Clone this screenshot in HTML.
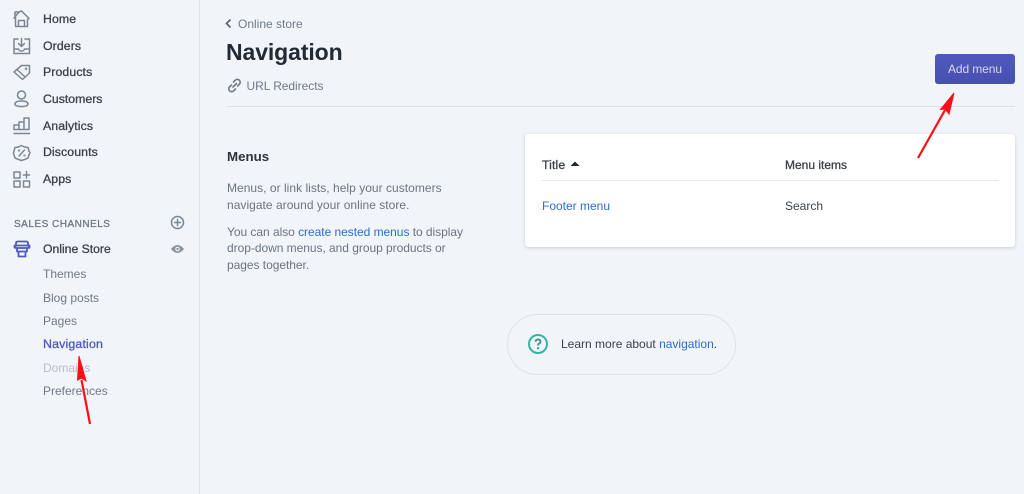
<!DOCTYPE html>
<html><head><meta charset="utf-8">
<style>
html,body{margin:0;padding:0;width:1024px;height:494px;overflow:hidden;background:#f1f4f8;}
body{position:relative;font-family:"Liberation Sans",sans-serif;color:#3b424b;filter:blur(.35px);}
.t{position:absolute;white-space:nowrap;font-size:12px;line-height:16px;letter-spacing:0;}
.m{-webkit-text-stroke:.3px currentColor;font-size:12.3px;letter-spacing:.1px;}
.g{color:#6f7a87}
a{color:#2c6ecb;text-decoration:none}
svg{position:absolute;overflow:visible}
.ic{fill:none;stroke:#7b8794;stroke-width:1.5;stroke-linejoin:round;stroke-linecap:round}
</style></head><body>
<div style="position:absolute;left:199px;top:0;width:1px;height:494px;background:#dfe3e8"></div>

<svg class="ic" style="left:0;top:0" width="34" height="200" viewBox="0 0 34 200">
<path d="M15 17 V12 H19 L21.500 11 L29 18.500 L27.500 19.500 V26.500 H15.500 V17 M14 18 L19 12 M18.500 26.500 V20.500 H24.500 V26.500"/>
<path d="M14 39 H18 M25 39 H29.500 V53.500 H14 V39 M21.500 38.500 V46 M18.500 43.500 L21.500 46.500 L24.500 43.500 M14 49 H18.500 Q19 51 21.500 51 Q24 51 24.500 49 H29.500"/>
<path d="M14 72 L21.500 65.500 H29.500 V73 L22.500 79.500 Z M17 69.500 L24.500 76.500"/>
<circle cx="26" cy="68.800" r=".5"/>
<circle cx="21.500" cy="95" r="4"/>
<path d="M15 104 Q15 101 21.500 101 Q28 101 28 104 Q28 106.500 21.500 106.500 Q15 106.500 15 104Z"/>
<path d="M14 133.500 H29.500 M14 129.500 V125 H19 V129.500 M19 129.500 V122 H24 V129.500 M24 129.500 V118 H29 V129.500 M14 129.500 H29"/>
<path d="M21.500 145.500 L24.500 147 L28 147.500 L29 151 L30 153 L29 155 L28 158 L24.500 159.500 L21.500 160.500 L18.500 159.500 L15 158 L14 155 L13.500 153 L14 151 L15 147.500 L18.500 147 Z M19 156 L24.500 150"/>
<circle cx="19" cy="150.500" r=".4"/><circle cx="24.500" cy="155.500" r=".4"/>
<rect x="14" y="172" width="6" height="6"/><rect x="14" y="181" width="6" height="6"/><rect x="23.500" y="181" width="6" height="6"/>
<path d="M26.500 171.500 V178 M23.500 175 H29.500"/>
</svg>

<div class="t m" style="left:43px;top:11px">Home</div>
<div class="t m" style="left:43px;top:38px">Orders</div>
<div class="t m" style="left:43px;top:64px">Products</div>
<div class="t m" style="left:43px;top:91px;letter-spacing:0">Customers</div>
<div class="t m" style="left:43px;top:118px">Analytics</div>
<div class="t m" style="left:43px;top:144px">Discounts</div>
<div class="t m" style="left:43px;top:171px">Apps</div>

<div class="t m g" style="left:14px;top:216.500px;font-size:10px;letter-spacing:.5px">SALES CHANNELS</div>
<svg class="ic" style="left:170px;top:215px;stroke:#7b8794" width="16" height="16" viewBox="0 0 16 16"><circle cx="7.500" cy="7.500" r="6"/><path d="M7.500 4.500 V10.500 M4.500 7.500 H10.500"/></svg>
<svg style="left:170px;top:243px" width="16" height="12" viewBox="0 0 16 12"><path d="M1 6 Q7.500 -2 14 6 Q7.500 14 1 6Z" fill="#8a94a0"/><circle cx="7.500" cy="6" r="2.300" fill="#f1f4f8"/><circle cx="7.500" cy="6" r="1.200" fill="#8a94a0"/></svg>
<svg class="ic" style="left:0;top:0;stroke:#5059c0;stroke-width:1.800" width="34" height="270" viewBox="0 0 34 270"><path d="M16 246 V243 Q16 241.500 18 241.500 H26 Q28 241.500 28 243 V246 M14.500 245.500 H29.500 V247 Q29.500 248 28 248 H16 Q14.500 248 14.500 247 Z M17 248 V251.500 H27 V248 M18.500 251.500 V256.500 H25.500 V251.500"/></svg>
<div class="t m" style="left:43px;top:241px;font-size:12.2px;letter-spacing:0">Online Store</div>
<div class="t g" style="left:43px;top:266px">Themes</div>
<div class="t g" style="left:43px;top:290px">Blog posts</div>
<div class="t g" style="left:43px;top:313px">Pages</div>
<div class="t m" style="left:43px;top:336px;color:#5059c0;font-size:12.4px;letter-spacing:.15px">Navigation</div>
<div class="t" style="left:43px;top:360px;color:#b7bec7">Domains</div>
<div class="t g" style="left:43px;top:383px">Preferences</div>

<svg style="left:224px;top:18px" width="10" height="12" viewBox="0 0 10 12"><path d="M6.500 1.500 L2.500 5.500 L6.500 9.500" fill="none" stroke="#5c6773" stroke-width="1.700"/></svg>
<div class="t g" style="left:238px;top:16px">Online store</div>
<div class="t" style="left:226px;top:37px;font-size:23px;line-height:30px;font-weight:bold;color:#212b36;letter-spacing:-.1px">Navigation</div>
<svg class="ic" style="left:227px;top:78px;stroke:#6f7a87;stroke-width:1.600" width="15" height="15" viewBox="0 0 15 15"><path d="M6 9 L9.500 5.500 M6.500 4 L8.500 2 Q10.500 .5 12.500 2.300 Q14 4.500 12.500 6 L10.500 8 M8.500 11 L6.500 13 Q4.500 14.500 2.500 12.800 Q1 10.500 2.500 9 L4.500 7"/></svg>
<div class="t g" style="left:246.500px;top:78px;letter-spacing:-.05px">URL Redirects</div>
<div style="position:absolute;left:227px;top:106px;width:788px;height:1px;background:#dde1e6"></div>

<div style="position:absolute;left:935px;top:54px;width:80px;height:30px;border-radius:3px;background:linear-gradient(#5059bd,#474fb1)"></div>
<div class="t" style="left:948px;top:61px;color:#d5d8f0;letter-spacing:-.1px">Add menu</div>

<div class="t" style="left:227px;top:148px;font-size:13.3px;line-height:18px;font-weight:bold;color:#2d343c;letter-spacing:0">Menus</div>
<div class="t" style="left:227px;top:180px;color:#6b7581;line-height:17px;letter-spacing:.03px">Menus, or link lists, help your customers<br>navigate around your online store.</div>
<div class="t" style="left:227px;top:223.500px;color:#6b7581;line-height:16.700px;letter-spacing:-.04px">You can also <a href="#">create nested menus</a> to display<br>drop-down menus, and group products or<br>pages together.</div>

<div style="position:absolute;left:525px;top:134px;width:490px;height:113px;background:#fff;border-radius:3px;box-shadow:0 1px 3px rgba(63,63,68,.22)"></div>
<div class="t m" style="left:542px;top:157px">Title</div>
<svg style="left:570px;top:161px" width="10" height="6" viewBox="0 0 10 6"><path d="M0.500 5 L5 .5 L9.500 5Z" fill="#212b36"/></svg>
<div class="t m" style="left:785px;top:157px;font-size:12px;letter-spacing:0">Menu items</div>
<div style="position:absolute;left:542px;top:180px;width:457px;height:1px;background:#e6e9ec"></div>
<div class="t" style="left:542px;top:198px"><a href="#">Footer menu</a></div>
<div class="t" style="left:785px;top:198px">Search</div>

<div style="position:absolute;left:507px;top:314px;width:227px;height:59px;border:1px solid #dfe3e8;border-radius:31px"></div>
<svg style="left:527px;top:333px" width="22" height="22" viewBox="0 0 22 22"><circle cx="11" cy="11" r="9" fill="none" stroke="#2fb8a8" stroke-width="2"/><path d="M8.500 8.800 Q8.500 6.500 11 6.500 Q13.500 6.500 13.500 8.600 Q13.500 10 11.800 10.800 Q11 11.200 11 12.500" fill="none" stroke="#2f8f8a" stroke-width="1.700"/><circle cx="11" cy="15.200" r="1.100" fill="#2f8f8a"/></svg>
<div class="t" style="left:561px;top:336px">Learn more about <a href="#">navigation</a>.</div>

<svg style="left:0;top:0;pointer-events:none" width="1024" height="494" viewBox="0 0 1024 494">
<path d="M90 424 L81.500 380" stroke="#fb0f16" stroke-width="2.200" fill="none"/>
<path d="M79 356 L86 381 L81.500 378 L77.500 380 Z" fill="#fb0f16" stroke="#fb0f16"/>
<path d="M918 158 L945 110" stroke="#fb0f16" stroke-width="2.200" fill="none"/>
<path d="M954 93 L949 114 L945 109 L940.500 109.500 Z" fill="#fb0f16" stroke="#fb0f16"/>
</svg>
</body></html>
